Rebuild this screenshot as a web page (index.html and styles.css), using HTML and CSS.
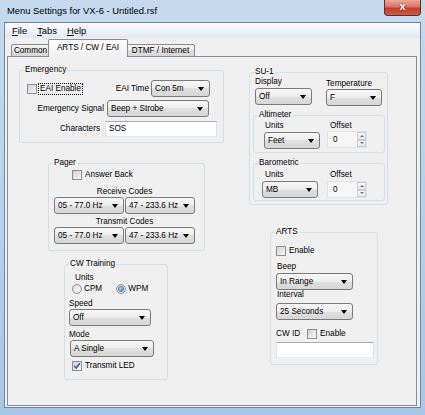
FILE: index.html
```html
<!DOCTYPE html>
<html>
<head>
    <link rel="stylesheet" href="styles.css">
</head>
<body>
    <div id="window">
        <div class="titlebar">
            <span class="title">Menu Settings for VX-6 - Untitled.rsf</span>
            <div class="close">x</div>
        </div>
        <div class="client">
            <div class="menubar">
                <span class="menu"><u>F</u>ile</span>
                <span class="menu"><u>T</u>abs</span>
                <span class="menu"><u>H</u>elp</span>
            </div>
            <div class="tabstrip">
                <div class="tab common">Common</div>
                <div class="tab selected">ARTS / CW / EAI</div>
                <div class="tab dtmf">DTMF / Internet</div>
            </div>
            <div class="panel">
                <div class="column">
                    <fieldset id="emergency">
                        <legend>Emergency</legend>
                        <div class="row eai-row">
                            <span class="check"></span>
                            <span class="focus">EAI Enable</span>
                            <span class="time-label">EAI Time</span>
                            <div class="combo time">Con 5m</div>
                        </div>
                        <div class="row signal-row">
                            <span class="row-label">Emergency Signal</span>
                            <div class="combo signal">Beep + Strobe</div>
                        </div>
                        <div class="row chars-row">
                            <span class="row-label wide-gap">Characters</span>
                            <div class="textbox chars">SOS</div>
                        </div>
                    </fieldset>

                    <fieldset id="pager">
                        <legend>Pager</legend>
                        <div class="row answer-row">
                            <span class="check"></span>
                            <span class="check-label">Answer Back</span>
                        </div>
                        <div class="codes">
                            <div class="codes-label">Receive Codes</div>
                            <div class="code-pair">
                                <div class="combo code">05 - 77.0 Hz</div>
                                <div class="combo code">47 - 233.6 Hz</div>
                            </div>
                            <div class="codes-label">Transmit Codes</div>
                            <div class="code-pair">
                                <div class="combo code">05 - 77.0 Hz</div>
                                <div class="combo code">47 - 233.6 Hz</div>
                            </div>
                        </div>
                    </fieldset>

                    <fieldset id="cw">
                        <legend>CW Training</legend>
                        <div class="units-label">Units</div>
                        <div class="row radio-row">
                            <span class="radio"></span>
                            <span class="radio-label">CPM</span>
                            <span class="radio on wpm"></span>
                            <span class="radio-label">WPM</span>
                        </div>
                        <div class="field-label">Speed</div>
                        <div class="combo speed">Off</div>
                        <div class="field-label">Mode</div>
                        <div class="combo mode">A Single</div>
                        <div class="row led-row">
                            <span class="check">
                                <svg width="8" height="8" viewBox="0 0 8 8"><path d="M1.2 3.8 L3.2 6 L6.8 1.2" fill="none" stroke="#3c5a96" stroke-width="1.5"/></svg>
                            </span>
                            <span class="check-label">Transmit LED</span>
                        </div>
                    </fieldset>
                </div>

                <div class="column">
                    <fieldset id="su1">
                        <legend>SU-1</legend>
                        <div class="su-top">
                            <div class="su-col">
                                <div>Display</div>
                                <div class="combo display">Off</div>
                            </div>
                            <div class="su-col temp">
                                <div>Temperature</div>
                                <div class="combo temperature">F</div>
                            </div>
                        </div>

                        <fieldset id="altimeter" class="sub">
                            <legend>Altimeter</legend>
                            <div class="unit-row">
                                <div class="unit-col">
                                    <div class="unit-label">Units</div>
                                    <div class="combo unit">Feet</div>
                                </div>
                                <div class="offset-col">
                                    <div class="offset-label">Offset</div>
                                    <div class="spin">
                                        <span class="value">0</span>
                                        <span class="buttons"><span class="up"></span><span class="down"></span></span>
                                    </div>
                                </div>
                            </div>
                        </fieldset>

                        <fieldset id="barometric" class="sub">
                            <legend>Barometric</legend>
                            <div class="unit-row">
                                <div class="unit-col">
                                    <div class="unit-label">Units</div>
                                    <div class="combo unit">MB</div>
                                </div>
                                <div class="offset-col">
                                    <div class="offset-label">Offset</div>
                                    <div class="spin">
                                        <span class="value">0</span>
                                        <span class="buttons"><span class="up"></span><span class="down"></span></span>
                                    </div>
                                </div>
                            </div>
                        </fieldset>
                    </fieldset>

                    <fieldset id="arts">
                        <legend>ARTS</legend>
                        <div class="row enable-row">
                            <span class="check"></span>
                            <span class="check-label">Enable</span>
                        </div>
                        <div class="arts-label beep">Beep</div>
                        <div class="combo arts-combo beep-combo">In Range</div>
                        <div class="arts-label">Interval</div>
                        <div class="combo arts-combo interval-combo">25 Seconds</div>
                        <div class="row cwid-row">
                            <span>CW ID</span>
                            <span class="check"></span>
                            <span class="check-label">Enable</span>
                        </div>
                        <div class="textbox cwid"></div>
                    </fieldset>
                </div>
            </div>
        </div>
    </div>
</body>
</html>
```

FILE: styles.css
```css
body {
    margin: 0;
    width: 425px;
    height: 415px;
    overflow: hidden;
    font-family: "Liberation Sans", Arial, sans-serif;
    font-size: 8.2px;
    line-height: 10px;
    color: #000;
    background: linear-gradient(to bottom, #c6daef 0%, #bbd2eb 40%, #a9c6e6 100%);
}

#window {
    display: flex;
    flex-direction: column;
    height: 415px;
}

/* window frame */

.titlebar {
    display: flex;
    height: 22px;
    flex-shrink: 0;
}

.title {
    margin: 5px 0 0 7px;
    font-size: 9.4px;
    line-height: 11px;
}

.close {
    margin: 0 4px 0 auto;
    width: 37px;
    height: 16px;
    box-sizing: border-box;
    border: 1px solid #6a2a22;
    border-top: 0;
    border-radius: 0 0 4px 4px;
    background: linear-gradient(#e8a99c, #d87564 45%, #c33e2d 55%, #d05b45);
    color: #fff;
    text-align: center;
    font: bold 11px/13px "Liberation Sans", Arial, sans-serif;
    text-shadow: 0 0 2px #4a120b;
}

.client {
    margin: 0 4px;
    height: 386px;
    box-sizing: border-box;
    border: 1px solid #6f87a3;
    background: #f0f0f0;
}

.menubar {
    display: flex;
    align-items: center;
    height: 15px;
    padding-left: 2px;
    font-size: 9.4px;
    background: linear-gradient(#fbfcfe, #e2e9f3);
}

.menu {
    padding: 0 5px;
}

/* tabs */

.tabstrip {
    display: flex;
    align-items: flex-end;
    height: 18px;
    padding-left: 6px;
}

.tab {
    position: relative;
    box-sizing: border-box;
    height: 13px;
    margin-bottom: -1px;
    border: 1px solid #898c95;
    border-radius: 2px 2px 0 0;
    background: linear-gradient(#f4f4f4, #e9e9e9 50%, #dedede 50%, #d6d6d6);
    text-align: center;
    line-height: 11px;
}

.tab.common {
    width: 39px;
}

.tab.selected {
    z-index: 2;
    width: 80px;
    height: 18px;
    margin: 0 -2px -1px;
    border-bottom: 0;
    background: linear-gradient(#fdfdfd, #f0f0f0);
    line-height: 15px;
    padding-bottom: 2px;
}

.tab.dtmf {
    width: 69px;
}

.panel {
    display: grid;
    grid-template-columns: 241px 1fr;
    align-items: start;
    margin-left: 2px;
    width: 410px;
    height: 350px;
    box-sizing: border-box;
    border: 1px solid #898c95;
    background: #f0f0f0;
}

.column {
    display: flex;
    flex-direction: column;
    align-items: flex-start;
}

/* group boxes */

fieldset {
    margin: 0;
    padding: 0;
    min-width: 0;
    box-sizing: border-box;
    border: 1px solid #d5dfe5;
    border-radius: 3px;
}

legend {
    margin-left: 4px;
    padding: 0 1px;
    height: 10px;
    line-height: 10px;
}

.row {
    display: flex;
    align-items: center;
}

/* controls */

.combo {
    display: flex;
    align-items: center;
    box-sizing: border-box;
    height: 17px;
    padding-left: 3px;
    border: 1px solid #7a7a7a;
    border-radius: 3px;
    background: linear-gradient(#f7f7f7, #ededed 50%, #e0e0e0 50%, #d6d6d6);
    white-space: nowrap;
}

.combo::after {
    content: "";
    margin-left: auto;
    margin-right: 5px;
    border-left: 3px solid transparent;
    border-right: 3px solid transparent;
    border-top: 4px solid #000;
}

.textbox {
    box-sizing: border-box;
    height: 16px;
    padding-left: 3px;
    border: 1px solid;
    border-color: #abadb3 #dbdfe6 #e3e9ef #e2e3ea;
    background: #fff;
    line-height: 14px;
}

.check {
    display: flex;
    align-items: center;
    justify-content: center;
    width: 10px;
    height: 10px;
    box-sizing: border-box;
    border: 1px solid #8e8f8f;
    background: linear-gradient(135deg, #cfd2d7, #f7f7f7);
    flex-shrink: 0;
}

.check-label {
    margin-left: 3px;
}

.radio {
    display: flex;
    align-items: center;
    justify-content: center;
    width: 10px;
    height: 10px;
    box-sizing: border-box;
    border: 1px solid #8e8f8f;
    border-radius: 50%;
    background: radial-gradient(circle at 60% 60%, #fbfbfb, #d3d3d3);
}

.radio.on::after {
    content: "";
    width: 4px;
    height: 4px;
    border-radius: 50%;
    background: radial-gradient(circle at 35% 35%, #a8dcfb, #1d6cb4);
    box-shadow: 0 0 0 1px #4f86b8;
}

.radio-label {
    margin-left: 2px;
}

.spin {
    display: flex;
    box-sizing: border-box;
    width: 40px;
    height: 17px;
    border: 1px solid #e4e4e4;
    background: #f6f6f6;
}

.spin .value {
    padding-left: 5px;
    line-height: 15px;
}

.spin .buttons {
    display: flex;
    flex-direction: column;
    margin-left: auto;
    width: 9px;
}

.spin .up,
.spin .down {
    display: flex;
    align-items: center;
    justify-content: center;
    flex: 1;
    box-sizing: border-box;
    border: 1px solid #c5cedb;
    background: linear-gradient(#f9fafc, #e4e9ef);
}

.spin .up::after {
    content: "";
    border-left: 2px solid transparent;
    border-right: 2px solid transparent;
    border-bottom: 2px solid #5b7599;
}

.spin .down::after {
    content: "";
    border-left: 2px solid transparent;
    border-right: 2px solid transparent;
    border-top: 2px solid #5b7599;
}

/* emergency */

#emergency {
    margin: 8px 0 0 11px;
    width: 205px;
    padding-bottom: 5px;
}

.eai-row {
    margin-top: 5px;
    height: 17px;
    padding: 0 13px 0 7px;
}

.focus {
    margin-left: 1px;
    padding: 0 1px;
    border: 1px dotted #000;
}

.time-label {
    margin: 0 2px 0 auto;
}

.combo.time {
    width: 59px;
}

.signal-row {
    justify-content: flex-end;
    margin-top: 3px;
    height: 17px;
    padding-right: 14px;
}

.row-label {
    margin-right: 3px;
}

.row-label.wide-gap {
    margin-right: 5px;
}

.combo.signal {
    width: 102px;
}

.chars-row {
    justify-content: flex-end;
    margin-top: 4px;
    height: 16px;
    padding-right: 6px;
}

.textbox.chars {
    width: 112px;
}

/* pager */

#pager {
    margin: 15px 0 0 40px;
    width: 157px;
    padding-bottom: 6px;
}

.answer-row {
    margin-top: 2px;
    height: 10px;
    padding-left: 23px;
}

.codes {
    margin-left: 5px;
    width: 141px;
}

.codes-label {
    margin-top: 3px;
    text-align: center;
}

.codes-label:first-child {
    margin-top: 7px;
}

.code-pair {
    display: flex;
    gap: 1px;
}

.combo.code {
    width: 70px;
}

/* cw training */

#cw {
    margin: 8px 0 0 56px;
    width: 104px;
    padding-bottom: 8px;
}

.units-label {
    margin-top: 4px;
    padding-left: 10px;
}

.radio-row {
    margin-top: 1px;
    height: 10px;
    padding-left: 7px;
}

.radio.wpm {
    margin-left: 14px;
}

.field-label {
    margin-top: 5px;
    padding-left: 4px;
}

.field-label + .combo + .field-label {
    margin-top: 4px;
}

.combo.speed {
    margin-left: 4px;
    width: 82px;
}

.combo.mode {
    margin-left: 5px;
    width: 84px;
}

.led-row {
    margin-top: 4px;
    height: 10px;
    padding-left: 7px;
}

/* su-1 */

#su1 {
    margin-top: 10px;
    width: 139px;
    padding-bottom: 3px;
}

.su-top {
    display: flex;
    padding-left: 5px;
}

.su-col .combo {
    margin-top: 1px;
}

.su-col.temp {
    margin: 2px 0 0 14px;
}

.su-col.temp .combo {
    margin-top: 0;
}

.combo.display {
    width: 57px;
}

.combo.temperature {
    width: 56px;
}

fieldset.sub {
    margin: 4px 0 0 3px;
    width: 132px;
}

#altimeter {
    padding-bottom: 3px;
}

#barometric {
    margin-top: 5px;
    padding-bottom: 2px;
}

.unit-row {
    display: flex;
}

.unit-col {
    margin-left: 10px;
}

.unit-label {
    margin-top: 1px;
    padding-left: 1px;
}

.unit-col .combo {
    margin-top: 1px;
}

.combo.unit {
    width: 56px;
}

.offset-col {
    margin-left: 7px;
}

.offset-label {
    margin-top: 1px;
    padding-left: 3px;
}

#barometric .unit-col {
    margin-left: 8px;
}

#barometric .unit-label {
    margin-top: 2px;
    padding-left: 3px;
}

#barometric .offset-col {
    margin-left: 9px;
}

#barometric .offset-label {
    margin-top: 2px;
}

#barometric .spin {
    margin-top: 1px;
}

/* arts */

#arts {
    margin: 22px 0 0 21px;
    width: 108px;
    padding-bottom: 6px;
}

.enable-row {
    margin-top: 9px;
    height: 10px;
    padding-left: 5px;
}

.arts-label {
    padding-left: 6px;
}

.arts-label.beep {
    margin-top: 6px;
}

.combo.arts-combo {
    margin-left: 5px;
    width: 77px;
}

.beep-combo {
    margin-top: 1px;
}

.interval-combo {
    margin-top: 3px;
}

.cwid-row {
    margin-top: 9px;
    height: 10px;
    padding-left: 5px;
}

.cwid-row .check {
    margin-left: 7px;
}

.check-label {
    white-space: nowrap;
}

.textbox.cwid {
    margin: 3px 0 0 5px;
    width: 98px;
}
```
